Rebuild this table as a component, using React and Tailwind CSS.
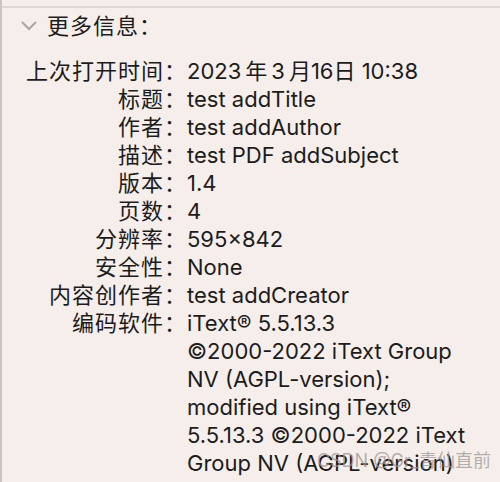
import React from 'react';

const rows = [
  ['上次打开时间：', ['2023\u2009年\u20093\u2009月16日 10:38']],
  ['标题：', ['test addTitle']],
  ['作者：', ['test addAuthor']],
  ['描述：', ['test PDF addSubject']],
  ['版本：', ['1.4']],
  ['页数：', ['4']],
  ['分辨率：', ['595×842']],
  ['安全性：', ['None']],
  ['内容创作者：', ['test addCreator']],
  ['编码软件：', [
    'iText® 5.5.13.3',
    '©2000-2022 iText Group',
    'NV (AGPL-version);',
    'modified using iText®',
    '5.5.13.3 ©2000-2022 iText',
    'Group NV (AGPL-version)',
  ]],
];

export default function App() {
  return (
    <div
      className="relative w-[500px] h-[482px] overflow-hidden bg-[#f5eeeb] border-l-2 border-[#c9c5c3] text-[#1c1c1c] text-[22px] leading-[28px]"
      style={{ fontFamily: 'Inter, "Noto Sans CJK SC", sans-serif' }}
    >
      <div className="mt-[6px] h-[2px] bg-[#dcd8d6]" />
      <div className="flex items-center h-[28px] mt-[4px] pl-[18px]">
        <svg width="18" height="12" viewBox="0 0 18 12" className="mr-[9px]">
          <path d="M2 2 L9 9 L16 2" fill="none" stroke="#aaa6a4" strokeWidth="2" />
        </svg>
        <span className="tracking-[1px]">更多信息：</span>
      </div>
      <div className="mt-[17px] grid grid-cols-[185px_1fr]">
        {rows.map(([k, lines]) => (
          <React.Fragment key={k}>
            <div className="text-right whitespace-nowrap tracking-[1px]">{k}</div>
            <div className="whitespace-nowrap">
              {lines.map((l) => (
                <div key={l}>{l}</div>
              ))}
            </div>
          </React.Fragment>
        ))}
      </div>
      <div className="absolute right-[9px] bottom-[9px] text-[18px] text-[#9c9795]/75 leading-[24px]">
        CSDN @Gr_青仙直前
      </div>
    </div>
  );
}
